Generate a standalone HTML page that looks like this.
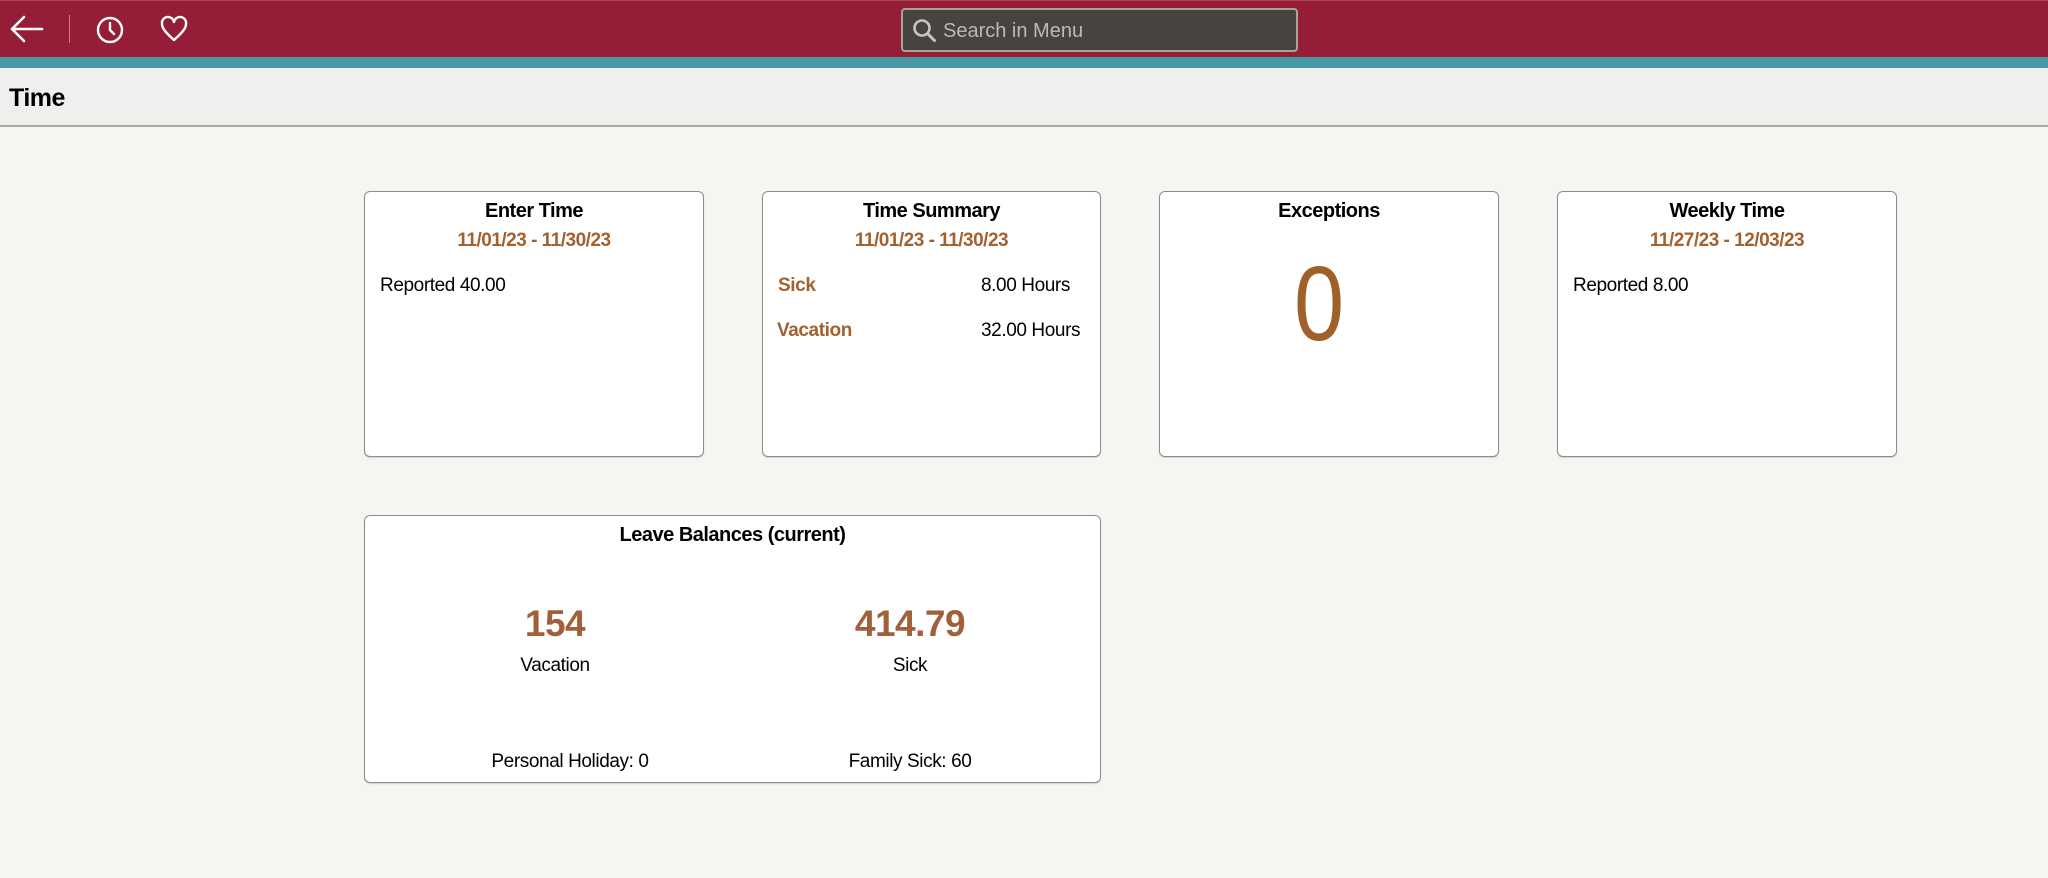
<!DOCTYPE html>
<html><head><meta charset="utf-8"><style>
*{margin:0;padding:0;box-sizing:border-box}
body{width:2048px;height:878px;overflow:hidden;background:#f6f5f2;font-family:"Liberation Sans",Arial,sans-serif;position:relative;color:#000}
.hdr{position:absolute;left:0;top:0;width:2048px;height:57px;background:#961d36;border-top:1px solid #a8455a}
.teal{position:absolute;left:0;top:57px;width:2048px;height:11px;background:#479aa4}
.tbar{position:absolute;left:0;top:68px;width:2048px;height:59px;background:#f0efed;border-bottom:2px solid #a9a8a6}
.tbar h1{position:absolute;left:9px;top:16px;font-size:25px;font-weight:bold;letter-spacing:-0.5px}
.search{position:absolute;left:901px;top:7px;width:397px;height:44px;background:#48433e;border:2px solid #a7a29c;border-radius:4px;color:#bdb9b4;font-size:20px}
.search span{position:absolute;left:40px;top:10px}
.card{position:absolute;background:#fff;border:1.5px solid #8d8d8d;border-radius:6px;box-shadow:0 1px 1px rgba(0,0,0,.15)}
.t{position:absolute;left:0;right:0;text-align:center;font-weight:bold;font-size:20px;top:8px;letter-spacing:-0.5px}
.d{position:absolute;left:0;right:0;text-align:center;font-weight:bold;font-size:19px;top:38px;color:#a3612f;letter-spacing:-0.5px}
.txt{position:absolute;font-size:19px;letter-spacing:-0.4px}
.br{color:#a3612f;font-weight:bold}
</style></head><body>
<div class="hdr">
<svg style="position:absolute;left:8px;top:12px" width="38" height="32" viewBox="0 0 38 32"><path d="M34 16H4M16 4L4 16l12 12" fill="none" stroke="#fff" stroke-width="2.6" stroke-linecap="round" stroke-linejoin="round"/></svg>
<div style="position:absolute;left:69px;top:14px;width:1px;height:28px;background:#c77d8d"></div>
<svg style="position:absolute;left:95px;top:14px" width="30" height="30" viewBox="0 0 30 30"><circle cx="15" cy="15" r="12" fill="none" stroke="#fff" stroke-width="2.4"/><path d="M15 8v7l4 4" fill="none" stroke="#fff" stroke-width="2.4" stroke-linecap="round"/></svg>
<svg style="position:absolute;left:159px;top:14px" width="30" height="28" viewBox="0 0 30 28"><path d="M15 25C6 17 3 13 3 9a6 6 0 0 1 12-2 6 6 0 0 1 12 2c0 4-3 8-12 16z" fill="none" stroke="#fff" stroke-width="2.4" stroke-linejoin="round"/></svg>
<div class="search"><svg style="position:absolute;left:9px;top:8px" width="26" height="26" viewBox="0 0 26 26"><circle cx="10" cy="10" r="7.5" fill="none" stroke="#c9c5c0" stroke-width="2.6"/><path d="M15.5 15.5l7 7" stroke="#c9c5c0" stroke-width="3" stroke-linecap="round"/></svg><span>Search in Menu</span></div>
</div>
<div class="teal"></div>
<div class="tbar"><h1>Time</h1></div>

<div class="card" style="left:364px;top:191px;width:340px;height:266px">
<div class="t">Enter Time</div><div class="d">11/01/23 - 11/30/23</div>
<div class="txt" style="left:15px;top:83px">Reported 40.00</div></div>

<div class="card" style="left:762px;top:191px;width:339px;height:266px">
<div class="t">Time Summary</div><div class="d">11/01/23 - 11/30/23</div>
<div class="txt br" style="left:15px;top:83px">Sick</div>
<div class="txt" style="left:218px;top:83px">8.00 Hours</div>
<div class="txt br" style="left:14px;top:128px">Vacation</div>
<div class="txt" style="left:218px;top:128px">32.00 Hours</div></div>

<div class="card" style="left:1159px;top:191px;width:340px;height:266px">
<div class="t">Exceptions</div>
<div style="position:absolute;left:0;right:20px;top:54px;text-align:center;font-size:106px;color:#a0602a;line-height:1.1;transform:scaleX(0.85)">0</div></div>

<div class="card" style="left:1557px;top:191px;width:340px;height:266px">
<div class="t">Weekly Time</div><div class="d">11/27/23 - 12/03/23</div>
<div class="txt" style="left:15px;top:83px">Reported 8.00</div></div>

<div class="card" style="left:364px;top:515px;width:737px;height:268px">
<div class="t">Leave Balances (current)</div>
<div style="position:absolute;left:90px;width:200px;top:87px;text-align:center;font-size:37px;font-weight:bold;color:#a0603a;letter-spacing:-0.5px">154</div>
<div style="position:absolute;left:445px;width:200px;top:87px;text-align:center;font-size:37px;font-weight:bold;color:#a0603a;letter-spacing:-0.5px">414.79</div>
<div class="txt" style="left:90px;width:200px;top:139px;text-align:center">Vacation</div>
<div class="txt" style="left:445px;width:200px;top:139px;text-align:center">Sick</div>
<div class="txt" style="left:80px;width:250px;top:235px;text-align:center">Personal Holiday: 0</div>
<div class="txt" style="left:420px;width:250px;top:235px;text-align:center">Family Sick: 60</div></div>
</body></html>
